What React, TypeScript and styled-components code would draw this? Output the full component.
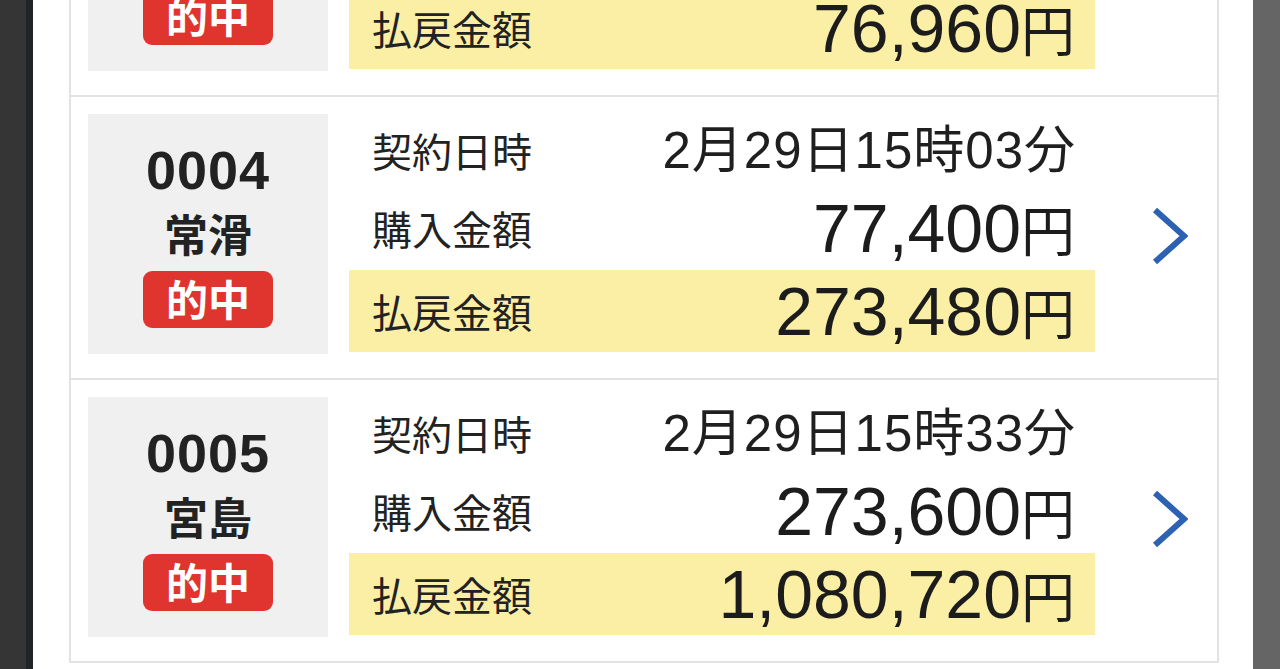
import styled, { createGlobalStyle } from 'styled-components';

type Ticket = {
  no: string;
  place: string;
  date: string;
  bought: string;
  payout: string;
};

const tickets: Ticket[] = [
  { no: '0003', place: '浜名湖', date: '2月29日14時31分', bought: '22,000', payout: '76,960' },
  { no: '0004', place: '常滑', date: '2月29日15時03分', bought: '77,400', payout: '273,480' },
  { no: '0005', place: '宮島', date: '2月29日15時33分', bought: '273,600', payout: '1,080,720' },
];

const Chevron = () => (
  <svg width="36" height="58" viewBox="0 0 36 58" aria-hidden="true">
    <polyline
      points="3,3 32,29 3,55"
      fill="none"
      stroke="#2d62b3"
      strokeWidth="6"
      strokeLinejoin="miter"
    />
  </svg>
);

const App = () => {
  return (
    <>
      <GlobalStyle />
      <Screen>
        <LeftEdge />
        <Panel>
          <List>
            {tickets.map((t) => (
              <Card key={t.no}>
                <RaceBox>
                  <RaceNo>{t.no}</RaceNo>
                  <Place>{t.place}</Place>
                  <HitBadge>的中</HitBadge>
                </RaceBox>

                <Info>
                  <Row>
                    <Label>契約日時</Label>
                    <DateValue>{t.date}</DateValue>
                  </Row>
                  <Row>
                    <Label>購入金額</Label>
                    <Amount>
                      {t.bought}
                      <Yen>円</Yen>
                    </Amount>
                  </Row>
                  <Row $highlight>
                    <Label>払戻金額</Label>
                    <Amount>
                      {t.payout}
                      <Yen>円</Yen>
                    </Amount>
                  </Row>
                </Info>

                <Arrow>
                  <Chevron />
                </Arrow>
              </Card>
            ))}
          </List>
        </Panel>
        <RightEdge />
      </Screen>
    </>
  );
};

const GlobalStyle = createGlobalStyle`
  html, body {
    margin: 0;
    padding: 0;
    background: #ffffff;
  }
  body {
    font-family: "Liberation Sans", "Noto Sans CJK JP", sans-serif;
    color: #1f1f1f;
  }
`;

const Screen = styled.div`
  display: flex;
  width: 1280px;
  height: 669px;
  overflow: hidden;
`;

const LeftEdge = styled.div`
  width: 26px;
  flex-shrink: 0;
  background: #353535;
  border-right: 7px solid #1f2428;
`;

const RightEdge = styled.div`
  width: 27px;
  flex-shrink: 0;
  background: #656565;
`;

const Panel = styled.div`
  flex: 1;
  background: #ffffff;
  padding: 0 34px 0 36px;
  overflow: hidden;
`;

const List = styled.div`
  margin-top: -186px;
  border-left: 2px solid #e2e2e2;
  border-right: 2px solid #e2e2e2;
`;

const Card = styled.div`
  display: flex;
  align-items: center;
  padding: 17px 0 24px 17px;
  border-bottom: 2px solid #e2e2e2;
`;

const RaceBox = styled.div`
  width: 240px;
  height: 240px;
  flex-shrink: 0;
  box-sizing: border-box;
  padding-top: 24px;
  background: #f0f0f0;
  display: flex;
  flex-direction: column;
  align-items: center;
`;

const RaceNo = styled.div`
  font-family: "Liberation Sans", sans-serif;
  font-weight: 700;
  font-size: 54px;
  line-height: 64px;
  letter-spacing: 1px;
  color: #222;
`;

const Place = styled.div`
  margin-top: 3px;
  font-family: "Noto Sans CJK JP", sans-serif;
  font-weight: 700;
  font-size: 44px;
  line-height: 56px;
  color: #222;
`;

const HitBadge = styled.div`
  margin-top: 10px;
  width: 130px;
  height: 57px;
  border-radius: 9px;
  background: #e0342f;
  color: #ffffff;
  text-align: center;
  font-family: "Noto Sans CJK JP", sans-serif;
  font-weight: 700;
  font-size: 42px;
  line-height: 53px;
`;

const Info = styled.div`
  width: 746px;
  margin-left: 21px;
  flex-shrink: 0;
  display: grid;
  grid-template-rows: 72px 84px 82px;
  align-self: flex-start;
`;

const Row = styled.div<{ $highlight?: boolean }>`
  display: flex;
  align-items: center;
  justify-content: space-between;
  padding: 0 20px 0 23px;
  background: ${({ $highlight }) => ($highlight ? '#fbefa6' : 'transparent')};
`;

const Label = styled.span`
  font-family: "Noto Sans CJK JP", sans-serif;
  font-size: 40px;
  line-height: 1;
  color: #222;
`;

const DateValue = styled.span`
  font-size: 51px;
  line-height: 1;
  letter-spacing: 1px;
  margin-right: -1px;
  color: #1f1f1f;
`;

const Amount = styled.span`
  font-size: 68px;
  line-height: 1;
  color: #1c1c1c;
  white-space: nowrap;
`;

const Yen = styled.span`
  font-family: "Noto Sans CJK JP", sans-serif;
  font-size: 54px;
`;

const Arrow = styled.div`
  margin-left: 57px;
  margin-top: 4px;
  display: flex;
  align-items: center;
`;

export default App;
